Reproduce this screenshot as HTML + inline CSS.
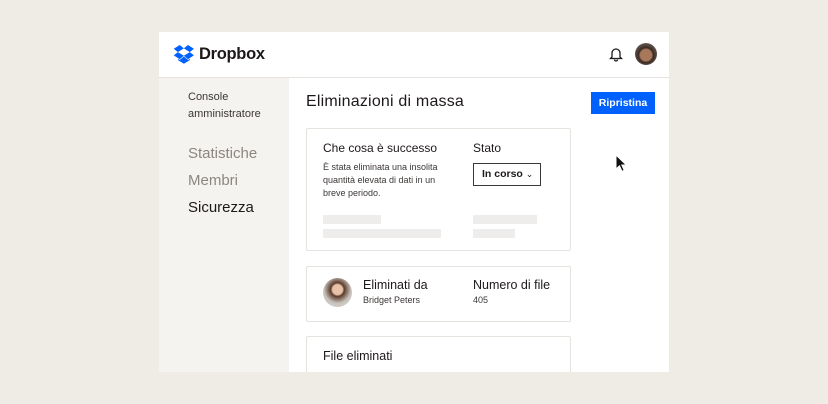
<!DOCTYPE html>
<html><head><meta charset="utf-8"><style>
*{margin:0;padding:0;box-sizing:border-box}
body{width:828px;height:404px;background:#efebe5;font-family:"Liberation Sans",sans-serif;position:relative;overflow:hidden;color:#1e1919}
.a{position:absolute}
.win{left:159px;top:32px;width:510px;height:340px;background:#fff;overflow:hidden}
.card{background:#fff;border:1px solid #e6e3df;border-radius:2px}
.bar{background:#eeedeb;height:9px}
</style></head><body>
<div class="a win">
  <div class="a" style="left:0;top:45px;width:510px;height:1px;background:#e6e3df"></div>
  <svg class="a" style="left:14px;top:13px" width="22" height="19" viewBox="0 0 43 40"><path fill="#0061fe" d="M12.5 0L0 8l8.6 6.9 12.6-7.8zM0 21.8l12.5 8.2 8.7-7.3-12.6-7.8zM21.2 22.7l8.7 7.3 12.5-8.2-8.7-6.9zM42.4 8L29.9 0l-8.7 7.1 12.5 7.8zM21.3 24.3l-8.8 7.3-3.7-2.5v2.8l12.5 7.5 12.5-7.5v-2.8l-3.7 2.5z"/></svg>
  <div class="a" style="left:40px;top:13px;font-size:16.5px;font-weight:bold;letter-spacing:-0.3px">Dropbox</div>
  <svg class="a" style="left:450px;top:14px" width="14" height="16" viewBox="0 0 14 16"><path d="M3 11V7a4 4 0 0 1 8 0v4l1.5 1.5h-11z M5.5 13.5a1.5 1.5 0 0 0 3 0" fill="none" stroke="#1e1919" stroke-width="1.3"/></svg>
  <div class="a" style="left:476px;top:11px;width:22px;height:22px;border-radius:50%;background:radial-gradient(circle at 50% 55%,#a7785a 0 35%,#3b2a22 45%,#8a8583 100%)"></div>
  <div class="a" style="left:0;top:46px;width:130px;height:294px;background:#f5f3f0"></div>
  <div class="a" style="left:29px;top:57px;font-size:11px;line-height:17px;color:#3b3735">Console<br>amministratore</div>
  <div class="a" style="left:29px;top:108px;font-size:15px;line-height:27px;color:#8c8580">Statistiche<br>Membri<br><span style="color:#1e1919">Sicurezza</span></div>
  <div class="a" style="left:147px;top:61px;font-size:16px;letter-spacing:0.2px">Eliminazioni di massa</div>
  <div class="a" style="left:432px;top:60px;width:64px;height:22px;background:#0061fe;color:#fff;font-size:10.5px;font-weight:bold;text-align:center;line-height:22px">Ripristina</div>
  <svg class="a" style="left:456px;top:122px" width="13" height="19" viewBox="0 0 13 19"><path d="M1 1v14l3.5-3.2 2.5 5.5 2.2-1-2.4-5.3h4.5z" fill="#111" stroke="#fff" stroke-width="1"/></svg>
  <div class="a card" style="left:147px;top:96px;width:265px;height:123px">
    <div class="a" style="left:16px;top:12px;font-size:12px">Che cosa è successo</div>
    <div class="a" style="left:16px;top:32px;font-size:9px;line-height:13px;color:#3b3735">È stata eliminata una insolita<br>quantità elevata di dati in un<br>breve periodo.</div>
    <div class="a" style="left:166px;top:12px;font-size:12px">Stato</div>
    <div class="a" style="left:166px;top:34px;width:68px;height:23px;border:1px solid #3b3735;font-size:10.5px;font-weight:bold;line-height:21px;padding-left:8px">In corso <span style="font-weight:normal;font-size:9px">⌄</span></div>
    <div class="a bar" style="left:16px;top:86px;width:58px"></div>
    <div class="a bar" style="left:16px;top:100px;width:118px"></div>
    <div class="a bar" style="left:166px;top:86px;width:64px"></div>
    <div class="a bar" style="left:166px;top:100px;width:42px"></div>
  </div>
  <div class="a card" style="left:147px;top:234px;width:265px;height:56px">
    <div class="a" style="left:16px;top:11px;width:29px;height:29px;border-radius:50%;background:radial-gradient(circle at 50% 40%,#e8c2a8 0 22%,#5a3a2a 30%,#c9c3bd 60%,#d9d5d1 100%)"></div>
    <div class="a" style="left:56px;top:11px;font-size:12.5px">Eliminati da</div>
    <div class="a" style="left:56px;top:28px;font-size:9px;color:#3b3735">Bridget Peters</div>
    <div class="a" style="left:166px;top:11px;font-size:12.5px">Numero di file</div>
    <div class="a" style="left:166px;top:28px;font-size:9px;color:#3b3735">405</div>
  </div>
  <div class="a card" style="left:147px;top:304px;width:265px;height:60px">
    <div class="a" style="left:16px;top:12px;font-size:12.5px">File eliminati</div>
  </div>
</div>
</body></html>
